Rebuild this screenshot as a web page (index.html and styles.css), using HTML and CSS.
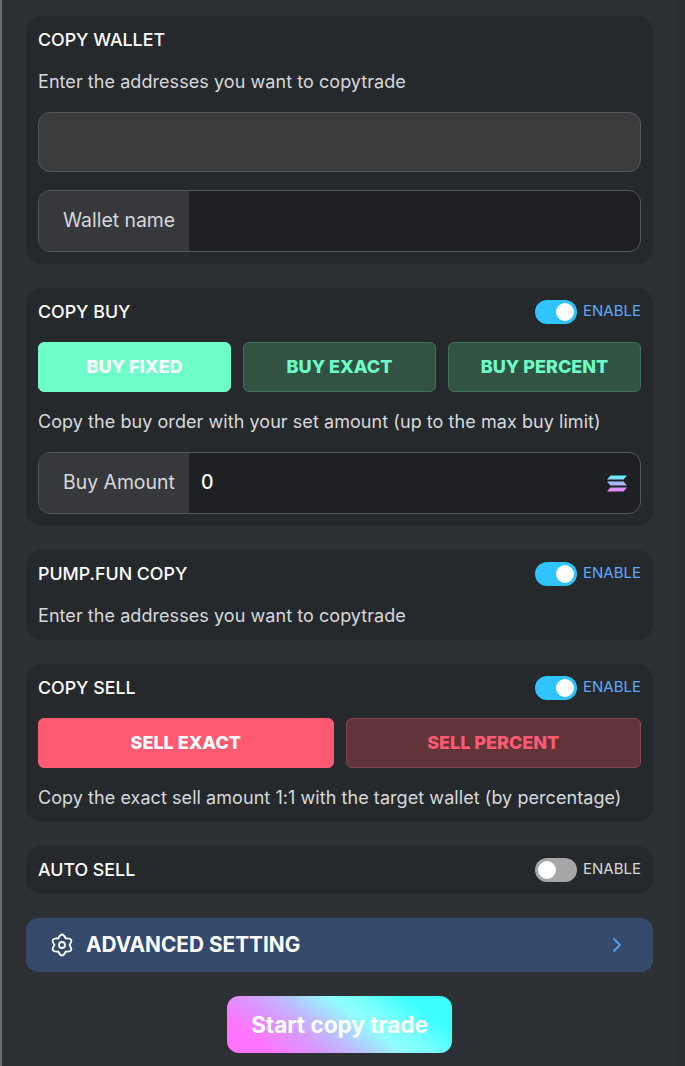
FILE: index.html
```html
<!DOCTYPE html>
<html lang="en">

<head>
    <meta charset="UTF-8">
    <meta name="viewport" content="width=device-width, initial-scale=1.0">
    <title>copy trade</title>
    <link rel="stylesheet" href="styles.css">
</head>

<body>
    <div class="page">
        <main class="panel">
            <section class="card">
                <div class="cardHead">
                    <h2 class="title">COPY WALLET</h2>
                </div>
                <p class="desc">Enter the addresses you want to copytrade</p>
                <div class="addressBox"></div>
                <div class="field">
                    <span class="fieldLabel">Wallet name</span>
                    <span class="fieldValue"></span>
                </div>
            </section>

            <section class="card">
                <div class="cardHead">
                    <h2 class="title">COPY BUY</h2>
                    <div class="toggleWrap">
                        <span class="toggle on"><span class="knob"></span></span>
                        <span class="toggleText on">ENABLE</span>
                    </div>
                </div>
                <div class="tabs">
                    <button class="tab buy active">BUY FIXED</button>
                    <button class="tab buy">BUY EXACT</button>
                    <button class="tab buy">BUY PERCENT</button>
                </div>
                <p class="desc">Copy the buy order with your set amount (up to the max buy limit)</p>
                <div class="field">
                    <span class="fieldLabel">Buy Amount</span>
                    <span class="fieldValue">0</span>
                    <svg class="solana" viewBox="0 0 20 17" width="20" height="17">
                        <defs>
                            <linearGradient id="sol" x1="0" y1="0" x2="0" y2="1">
                                <stop offset="0" stop-color="#5ff5ff" />
                                <stop offset="1" stop-color="#f47cff" />
                            </linearGradient>
                        </defs>
                        <path fill="url(#sol)" d="M3.5 0.5H20L16.5 4.5H0Z M0 6.5H16.5L20 10.5H3.5Z M3.5 12.5H20L16.5 16.5H0Z" />
                    </svg>
                </div>
            </section>

            <section class="card">
                <div class="cardHead">
                    <h2 class="title">PUMP.FUN COPY</h2>
                    <div class="toggleWrap">
                        <span class="toggle on"><span class="knob"></span></span>
                        <span class="toggleText on">ENABLE</span>
                    </div>
                </div>
                <p class="desc">Enter the addresses you want to copytrade</p>
            </section>

            <section class="card">
                <div class="cardHead">
                    <h2 class="title">COPY SELL</h2>
                    <div class="toggleWrap">
                        <span class="toggle on"><span class="knob"></span></span>
                        <span class="toggleText on">ENABLE</span>
                    </div>
                </div>
                <div class="tabs">
                    <button class="tab sell active">SELL EXACT</button>
                    <button class="tab sell">SELL PERCENT</button>
                </div>
                <p class="desc">Copy the exact sell amount 1:1 with the target wallet (by percentage)</p>
            </section>

            <section class="card">
                <div class="cardHead">
                    <h2 class="title">AUTO SELL</h2>
                    <div class="toggleWrap">
                        <span class="toggle"><span class="knob"></span></span>
                        <span class="toggleText">ENABLE</span>
                    </div>
                </div>
            </section>

            <div class="advanced">
                <svg class="gear" viewBox="0 0 24 24" width="24" height="24" fill="none" stroke="#fff" stroke-width="1.8" stroke-linejoin="round">
                    <path d="M8.25 5.5Q12 -2.5 15.75 5.5Q24.56 4.75 19.5 12Q24.56 19.25 15.75 18.5Q12 26.5 8.25 18.5Q-.56 19.25 4.5 12Q-.56 4.75 8.25 5.5Z" />
                    <circle cx="12" cy="12" r="3" />
                </svg>
                <span class="advancedText">ADVANCED SETTING</span>
                <svg class="chevron" viewBox="0 0 10 16" width="10" height="16" fill="none" stroke="#4aa3f5" stroke-width="1.8">
                    <path d="M1.5 1.5L8 8L1.5 14.5" />
                </svg>
            </div>

            <div class="startRow">
                <button class="start">Start copy trade</button>
            </div>
        </main>
        <div class="rightEdge"></div>
    </div>
</body>

</html>
```

FILE: styles.css
```css
* {
    margin: 0;
    padding: 0;
    box-sizing: border-box;
}

html,
body {
    height: 100%;
    overflow: hidden;
    background-color: #2d3035;
}

body {
    font-family: Inter, "Liberation Sans", sans-serif;
    color: #fff;
}

.page {
    display: flex;
    min-height: 100%;
}

.panel {
    flex: 1;
    display: flex;
    flex-direction: column;
    gap: 24px;
    padding: 16px 24px 13px;
    border-left: 2px solid #6b6c6e;
}

.rightEdge {
    width: 8px;
    background-color: #2b2e32;
}

.card {
    display: flex;
    flex-direction: column;
    padding: 12px;
    background-color: #26292c;
    border-radius: 16px;
}

.cardHead {
    display: flex;
    align-items: center;
    justify-content: space-between;
    height: 24px;
}

.title {
    font-size: 17.8px;
    font-weight: 500;
    line-height: 24px;
    color: #fff;
}

.desc {
    margin-top: 18px;
    font-size: 18px;
    line-height: 24px;
    color: #d6d9dc;
    letter-spacing: 0.06px;
}

.addressBox {
    height: 60px;
    margin-top: 18px;
    background-color: #3a3b3d;
    border: 1px solid #56575a;
    border-radius: 12px;
}

.field {
    display: flex;
    align-items: stretch;
    height: 62px;
    margin-top: 18px;
    background-color: #1f2023;
    border: 1px solid #56575a;
    border-radius: 12px;
    overflow: hidden;
}

.fieldLabel {
    display: flex;
    align-items: center;
    width: 150px;
    padding: 0 0 2px 24px;
    background-color: #37383c;
    font-size: 19.4px;
    color: #d6d9dc;
}

.fieldValue {
    flex: 1;
    display: flex;
    align-items: center;
    padding: 0 0 2px 12px;
    font-size: 19.4px;
    font-weight: 500;
    color: #fff;
}

.solana {
    align-self: center;
    margin-right: 13px;
}

.toggleWrap {
    display: flex;
    align-items: center;
    gap: 6px;
}

.toggle {
    display: flex;
    align-items: center;
    width: 42px;
    height: 24px;
    padding: 0 3px;
    background-color: #a6a7a9;
    border-radius: 12px;
}

.toggle.on {
    justify-content: flex-end;
    background-color: #2fc3ff;
}

.knob {
    width: 18px;
    height: 18px;
    background-color: #fff;
    border-radius: 50%;
}

.toggleText {
    padding-bottom: 4px;
    font-size: 15px;
    color: #d6d9dc;
}

.toggleText.on {
    color: #5fa8ff;
}

.tabs {
    display: flex;
    gap: 12px;
    margin-top: 18px;
}

.tab {
    flex: 1;
    height: 50px;
    padding-bottom: 2px;
    font-family: inherit;
    font-size: 18px;
    font-weight: 800;
    border-radius: 6px;
    border: 1px solid;
}

.tab.buy {
    color: #6effc9;
    background-color: #325344;
    border-color: #3f7059;
}

.tab.buy.active {
    color: #fff;
    background-color: #6effc9;
    border-color: #6effc9;
}

.tab.sell {
    color: #ff5a72;
    background-color: #603438;
    border-color: #85484f;
}

.tab.sell.active {
    color: #fff;
    background-color: #ff5a72;
    border-color: #ff5a72;
}

.advanced {
    display: flex;
    align-items: center;
    height: 54px;
    padding: 0 31px 0 24px;
    background-color: #354a6b;
    border-radius: 12px;
}

.gear {
    flex-shrink: 0;
}

.advancedText {
    flex: 1;
    margin-left: 12px;
    padding-bottom: 2px;
    font-size: 20.8px;
    font-weight: 700;
    color: #fff;
}

.startRow {
    display: flex;
    justify-content: center;
}

.start {
    width: 225px;
    height: 57px;
    font-family: inherit;
    font-size: 22.5px;
    font-weight: 700;
    color: #fff;
    border: 0;
    border-radius: 12px;
    background: linear-gradient(36deg, #ff74ff 15%, #dc94ff 30%, #c0b8ff 42%, #8fffff 60%, #7cffff 68%, #3dffff 84%, #3dffff 100%);
}
```
